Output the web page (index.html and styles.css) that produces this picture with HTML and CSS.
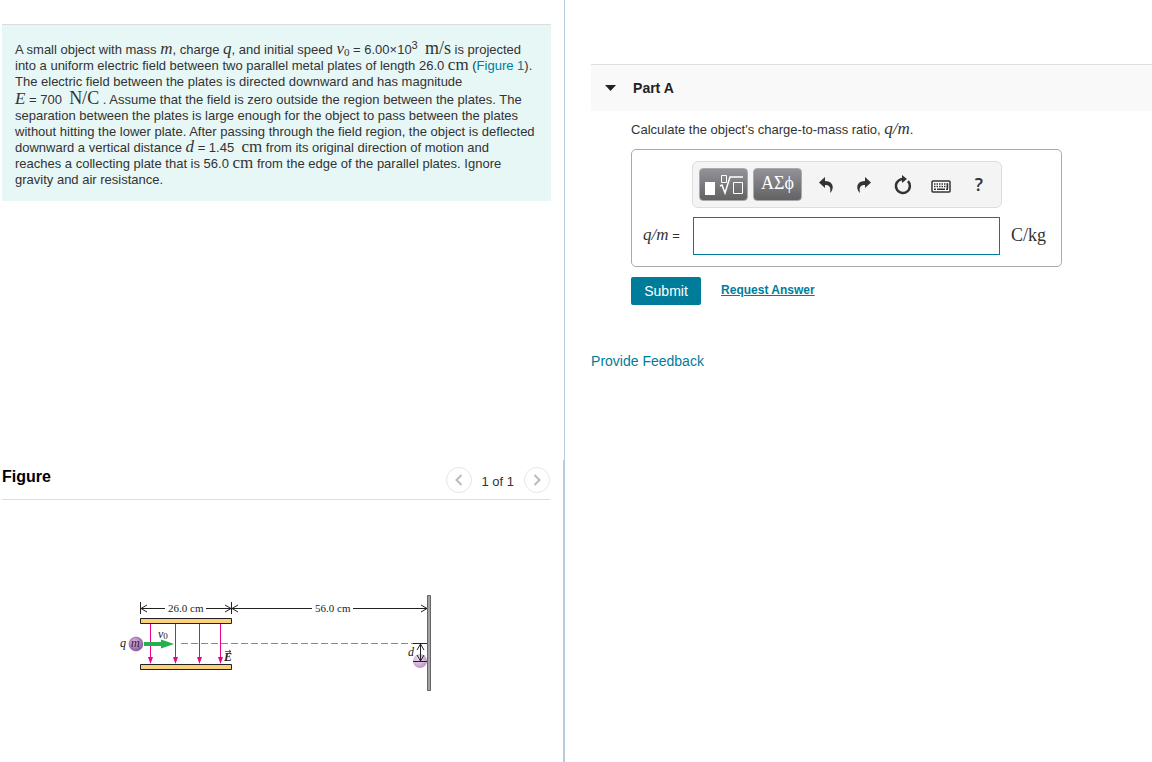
FILE: index.html
```html
<!DOCTYPE html>
<html lang="en">
<head>
    <meta charset="UTF-8">
    <meta name="viewport" content="width=device-width, initial-scale=1.0">
    <title>Part A - Charge-to-mass ratio</title>
    <link rel="stylesheet" href="styles.css">
</head>
<body>
    <div class="left-pane">
        <section class="problem-pane">
            <p class="problem">
                A small object with mass <i class="math">m</i>, charge <i class="math">q</i>, and initial speed <span class="nowrap"><i class="math">v</i><sub class="math">0</sub> = 6.00×10<sup>3</sup>&nbsp; <span class="unit">m/s</span></span> is projected into a uniform electric field between two parallel metal plates of length 26.0 <span class="math">cm</span> (<a href="#figure">Figure 1</a>). The electric field between the plates is directed downward and has magnitude <span class="nowrap"><i class="math">E</i> = 700&nbsp; <span class="unit">N/C</span> .</span> Assume that the field is zero outside the region between the plates. The separation between the plates is large enough for the object to pass between the plates without hitting the lower plate. After passing through the field region, the object is deflected downward a vertical distance <span class="nowrap"><i class="math">d</i> = 1.45&nbsp; <span class="math">cm</span></span> from its original direction of motion and reaches a collecting plate that is 56.0 <span class="math">cm</span> from the edge of the parallel plates. Ignore gravity and air resistance.
            </p>
        </section>

        <section class="figure-pane" id="figure">
            <div class="figure-header">
                <h2>Figure</h2>
                <div class="pager">
                    <button type="button" class="pager-button" aria-label="Previous figure">
                        <svg width="8" height="12" viewBox="0 0 8 12"><path d="M6.5 1 1.500 6l5 5"/></svg>
                    </button>
                    <span class="pager-text">1 of 1</span>
                    <button type="button" class="pager-button" aria-label="Next figure">
                        <svg width="8" height="12" viewBox="0 0 8 12"><path d="m1.5 1 5 5-5 5"/></svg>
                    </button>
                </div>
            </div>
            <svg class="diagram" width="316" height="104" viewBox="118 590 316 104">
                <defs>
                    <radialGradient id="ball" cx="40%" cy="35%" r="65%">
                        <stop offset="0" stop-color="#dcb8e4"/>
                        <stop offset="0.6" stop-color="#b27fc0"/>
                        <stop offset="1" stop-color="#8c579c"/>
                    </radialGradient>
                    <radialGradient id="ball-light" cx="40%" cy="35%" r="65%">
                        <stop offset="0" stop-color="#f0e0f5"/>
                        <stop offset="1" stop-color="#bd97ca"/>
                    </radialGradient>
                </defs>

                <!-- distances -->
                <g class="ink">
                    <path d="M140.500 602v12M231.500 602v12M141 608.500h24M206 608.500h25M232 608.500h80M353 608.500h74"/>
                    <path d="m147 605-6 3.500 6 3.500M225 605l6 3.500-6 3.500M238 605l-6 3.500 6 3.500M421 605l6 3.500-6 3.500"/>
                </g>
                <text class="label" x="168" y="612">26.0 cm</text>
                <text class="label" x="315" y="612">56.0 cm</text>

                <!-- field -->
                <path class="field" d="M150.500 624v35M175.500 624v35M199.500 624v35M220.500 624v35"/>
                <path class="field-head" d="M148 657h5l-2.500 7zM173 657h5l-2.500 7zM197 657h5l-2.500 7zM218 657h5l-2.500 7z"/>
                <path class="plate" d="M140.500 618.500h91v5h-91zM140.500 664.500h91v5h-91z"/>
                <path class="vector" d="M144 642h17v-2.500l13 4.500-13 4.500V646h-17z"/>
                <path class="path" d="M181 643.500h233"/>

                <circle cx="136" cy="644" r="7" fill="url(#ball)" stroke="#765080" stroke-width="0.500"/>
                <text class="label italic" x="120" y="647">q</text>
                <text class="label italic" x="131" y="647">m</text>
                <text class="label italic" x="158" y="638">v<tspan class="small" dy="1">0</tspan></text>
                <text class="label italic bold" x="224" y="661">E</text>
                <path class="ink thin" d="M225 651.500h6m-2-1.500 2 1.500-2 1.500"/>

                <!-- collecting plate -->
                <circle cx="420" cy="661" r="7" fill="url(#ball-light)"/>
                <path class="ink" d="M413 643.500h14M413 661.500h14M420.500 644v17M417 650l3.500-6 3.500 6M417 655l3.500 6 3.500-6"/>
                <text class="label italic" x="408" y="656">d</text>
                <path class="collector" d="M427.500 595.500h3v95h-3z"/>
            </svg>
        </section>
    </div>

    <main class="right-pane">
        <header class="part-header">
            <button type="button" class="toggle" aria-label="Collapse Part A"></button>
            <h2>Part A</h2>
        </header>

        <form class="part-body">
            <p class="question">Calculate the object's charge-to-mass ratio, <i class="math">q/m</i>.</p>

            <div class="answer-box">
                <div class="toolbar">
                    <button type="button" class="dark-button" aria-label="Templates">
                        <svg width="38" height="22" viewBox="0 0 38 22">
                            <path fill="#fff" d="M0 8h10v13H0z"/>
                            <path fill="none" stroke="#fff" d="M16.500 1.500h5v7h-5z M28.500 8.500h9v11h-9z"/>
                            <path fill="none" stroke="#fff" stroke-width="1.500" d="m15 12 2-1 3 8 5-16h13"/>
                        </svg>
                    </button>
                    <button type="button" class="dark-button symbols">ΑΣϕ</button>
                    <div class="tools">
                        <button type="button" class="tool" aria-label="Undo">
                            <svg width="16" height="16" viewBox="0 0 16 16"><path fill="#333" d="M7 0 1 5.500 7 11V8c5 0 6 3 5 8 5-5 3-12-5-12z"/></svg>
                        </button>
                        <button type="button" class="tool" aria-label="Redo">
                            <svg width="16" height="16" viewBox="0 0 16 16"><path fill="#333" d="m9 0 6 5.500L9 11V8c-5 0-6 3-5 8-5-5-3-12 5-12z"/></svg>
                        </button>
                        <button type="button" class="tool" aria-label="Reset">
                            <svg width="18" height="20" viewBox="0 0 18 20"><path fill="none" stroke="#333" stroke-width="2.500" d="M14 6.200A7 7 0 1 1 5 5.200Q7 4 10 4"/><path fill="#333" d="m8 0 5 4-5 4z"/></svg>
                        </button>
                        <button type="button" class="tool keyboard" aria-label="Keyboard shortcuts">
                            <svg width="20" height="13" viewBox="0 0 20 13"><rect x="1" y="1" width="18" height="11" rx="1" fill="#fff" stroke="#333" stroke-width="1.500"/><path fill="none" stroke="#333" stroke-width="1.500" stroke-dasharray="1.500 1" d="M3 4h14M3 6.500h14"/><path stroke="#333" stroke-width="1.500" d="M3 9.300h2M6 9.300h8M15 9.300h2M16.500 3.500v5"/></svg>
                        </button>
                        <button type="button" class="tool help" aria-label="Help">?</button>
                    </div>
                </div>
                <div class="answer-row">
                    <label for="answer"><i class="math">q/m</i> =</label>
                    <input type="text" id="answer" autocomplete="off">
                    <span class="answer-unit">C/kg</span>
                </div>
            </div>

            <div class="actions">
                <button type="submit" class="submit">Submit</button>
                <a href="#" class="request">Request Answer</a>
            </div>
        </form>

        <a href="#" class="feedback">Provide Feedback</a>
    </main>
</body>
</html>
```
FILE: styles.css
```css
* {
    box-sizing: border-box;
}
body {
    margin: 0;
    min-height: 100vh;
    display: grid;
    grid-template-columns: 49.05% 1fr;
    font-family: "Liberation Sans", Arial, sans-serif;
    font-size: 13px;
    line-height: 16px;
    color: #333;
    background-color: #fff;
}
h2, p {
    margin: 0;
}
a {
    color: #007c9b;
    text-decoration: none;
}
button {
    font-family: inherit;
    padding: 0;
    cursor: pointer;
}
.math {
    font-family: "Liberation Serif", "Times New Roman", serif;
    font-size: 17px;
    line-height: 14px;
}
.nowrap {
    white-space: nowrap;
}

/* Left side: problem text and figure */
.left-pane {
    display: flex;
    flex-direction: column;
}
.problem-pane {
    min-height: 460px;
    padding: 24px 13px 0 2px;
    border-right: 1px solid #b8cbdc;
}
.problem {
    padding: 15px 13px 13px;
    border-top: 1px solid #ddd;
    background-color: #e6f7f6;
}
.problem sub,
.problem sup {
    font-size: 11px;
    line-height: 0;
}
.problem sub {
    vertical-align: -2px;
}
.problem sup {
    vertical-align: 5px;
}
.unit {
    font-family: "Liberation Serif", "Times New Roman", serif;
    font-size: 18px;
    line-height: 16px;
}
.figure-pane {
    flex: 1;
    padding: 0 13px 0 2px;
    border-right: 2px solid #b8cbdc;
}
.figure-header {
    display: flex;
    justify-content: space-between;
    height: 40px;
    padding-top: 7px;
    border-bottom: 1px solid #ddd;
}
.figure-header h2 {
    font-size: 16px;
    line-height: 20px;
    color: #000;
}
.pager {
    display: flex;
    gap: 10px;
}
.pager-text {
    padding-top: 7px;
}
.pager-button {
    display: flex;
    align-items: center;
    justify-content: center;
    width: 26px;
    height: 26px;
    border: 1px solid #e6e6e6;
    border-radius: 50%;
    background-color: #fff;
}
.pager-button path {
    fill: none;
    stroke: #bbb;
    stroke-width: 2;
}

/* Diagram */
.diagram {
    display: block;
    margin: 90px auto 0;
}
.ink {
    fill: none;
    stroke: #222;
    stroke-width: 1;
}
.thin {
    stroke-width: 0.7;
}
.label {
    font-family: "Liberation Serif", "Times New Roman", serif;
    font-size: 11px;
    fill: #222;
}
.small {
    font-size: 9px;
    font-style: normal;
}
.italic {
    font-size: 12px;
    font-style: italic;
}
.bold {
    font-weight: bold;
}
.field {
    fill: none;
    stroke: #ec008c;
    stroke-width: 1;
}
.field-head {
    fill: #ec008c;
}
.plate {
    fill: #fdd07c;
    stroke: #222;
}
.vector {
    fill: #22b14c;
}
.path {
    stroke: #888;
    stroke-dasharray: 7 3;
}
.collector {
    fill: #a0a2a5;
    stroke: #666;
}

/* Right side: Part A */
.right-pane {
    padding: 64px 0 0 26px;
}
.part-header {
    display: flex;
    align-items: center;
    gap: 17px;
    height: 47px;
    padding-left: 14px;
    border-top: 1px solid #ddd;
    background-color: #f9f9f9;
}
.part-header h2 {
    font-size: 14px;
    color: #222;
}
.toggle {
    width: 11px;
    height: 6px;
    border: none;
    background-color: #222;
    clip-path: polygon(0 0, 100% 0, 50% 100%);
}
.part-body {
    padding: 11px 0 0 40px;
}
.question {
    margin-bottom: 11px;
}
.answer-box {
    max-width: 431px;
    padding: 11px 15px 11px 11px;
    border: 1px solid #aaa;
    border-radius: 5px;
}
.toolbar {
    display: flex;
    align-items: center;
    gap: 5px;
    width: 310px;
    height: 47px;
    margin-left: 49px;
    padding: 0 3px 0 6px;
    border: 1px solid #ddd;
    border-radius: 6px;
    background-color: #f4f4f4;
}
.dark-button {
    display: flex;
    align-items: center;
    justify-content: center;
    width: 49px;
    height: 33px;
    border: 1px solid #aaa;
    border-radius: 4px;
    color: #fff;
    background: linear-gradient(#93929b, #626262);
}
.symbols {
    padding-bottom: 2px;
    font-family: "Liberation Serif", serif;
    font-size: 18px;
}
.tools {
    display: flex;
    flex: 1;
}
.tool {
    display: flex;
    flex: 1;
    align-items: center;
    justify-content: center;
    height: 32px;
    border: none;
    color: #333;
    background: none;
}
.keyboard {
    padding-top: 3px;
}
.help {
    padding-bottom: 2px;
    font-family: "Open Sans", sans-serif;
    font-size: 18px;
    font-weight: 600;
}
.answer-row {
    display: flex;
    align-items: center;
    gap: 11px;
    margin-top: 9px;
}
.answer-row label {
    width: 39px;
    white-space: nowrap;
}
.answer-row input {
    flex: 1;
    min-width: 0;
    height: 38px;
    padding: 0 8px;
    border: 1px solid #007c9b;
    font-size: 16px;
}
.answer-unit {
    padding-bottom: 3px;
    font-family: "Liberation Serif", "Times New Roman", serif;
    font-size: 18px;
}
.actions {
    display: flex;
    gap: 20px;
    margin-top: 10px;
}
.submit {
    width: 70px;
    height: 28px;
    border: none;
    border-radius: 2px;
    font-size: 14px;
    color: #fff;
    background-color: #007c9b;
}
.request {
    padding-top: 5px;
    font-size: 12px;
    font-weight: bold;
    text-decoration: underline;
}
.feedback {
    display: inline-block;
    margin-top: 48px;
    font-size: 14px;
}
```
